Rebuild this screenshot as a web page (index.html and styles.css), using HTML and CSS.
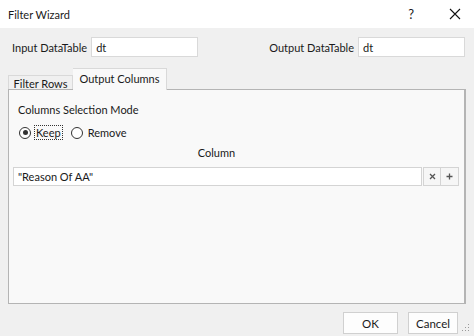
FILE: index.html
```html
<!DOCTYPE html>
<html lang="en">
<head>
    <meta charset="UTF-8">
    <title>Filter Wizard</title>
    <link rel="stylesheet" href="styles.css">
</head>
<body>
    <div class="window">
        <div class="titlebar">
            <span class="title">Filter Wizard</span>
            <div class="title-buttons">
                <span class="help">?</span>
                <svg class="close" width="12" height="12" viewBox="0 0 12 12">
                    <path d="M1 1 L11 11 M11 1 L1 11" stroke="#111" stroke-width="1.1" fill="none"/>
                </svg>
            </div>
        </div>

        <div class="tables">
            <div class="field">
                <label>Input DataTable</label>
                <div class="textbox table-box">dt</div>
            </div>
            <div class="field">
                <label>Output DataTable</label>
                <div class="textbox table-box">dt</div>
            </div>
        </div>

        <div class="tabs">
            <div class="tab">Filter Rows</div>
            <div class="tab active">Output Columns</div>
        </div>

        <div class="panel">
            <div class="group-title">Columns Selection Mode</div>
            <div class="radios">
                <div class="radio checked">
                    <span class="circle"></span>
                    <span class="radio-label focus">Keep</span>
                </div>
                <div class="radio">
                    <span class="circle"></span>
                    <span class="radio-label">Remove</span>
                </div>
            </div>
            <div class="column-header">Column</div>
            <div class="column-row">
                <div class="textbox column-box">"Reason Of AA"</div>
                <button class="small-btn">
                    <svg width="7" height="7" viewBox="0 0 7 7"><path d="M1 1 L6 6 M6 1 L1 6" stroke="#555" stroke-width="1.3"/></svg>
                </button>
                <button class="small-btn">
                    <svg width="7" height="7" viewBox="0 0 7 7"><path d="M3.5 0.5 V6.5 M0.5 3.5 H6.5" stroke="#555" stroke-width="1.3"/></svg>
                </button>
            </div>
        </div>

        <div class="footer">
            <button class="button">OK</button>
            <button class="button">Cancel</button>
            <svg class="grip" width="8" height="8" viewBox="0 0 8 8">
                <rect x="6" y="0" width="1" height="1" fill="#999"/>
                <rect x="3" y="3" width="1" height="1" fill="#999"/>
                <rect x="6" y="3" width="1" height="1" fill="#999"/>
                <rect x="0" y="6" width="1" height="1" fill="#999"/>
                <rect x="3" y="6" width="1" height="1" fill="#999"/>
                <rect x="6" y="6" width="1" height="1" fill="#999"/>
            </svg>
        </div>
    </div>
</body>
</html>
```

FILE: styles.css
```css
:root {
    --window-bg: #f0f0f0;
    --panel-bg: #f9f9f9;
    --panel-border: #b4b4b4;
    --input-border: #d9d9d9;
    --text-color: #1a1a1a;
}

* {
    box-sizing: border-box;
    margin: 0;
    padding: 0;
}

body {
    font-family: Lato, 'Open Sans', sans-serif;
    font-size: 11px;
    color: var(--text-color);
    background: var(--window-bg);
}

.window {
    width: 474px;
    height: 336px;
    display: flex;
    flex-direction: column;
    position: relative;
}

/* Title bar */
.titlebar {
    height: 28px;
    background: #ffffff;
    display: flex;
    align-items: center;
    justify-content: space-between;
    padding: 0 13px 0 8px;
}

.title-buttons {
    display: flex;
    align-items: center;
    gap: 35px;
}

.help {
    font-size: 13px;
}

/* Data table row */
.tables {
    display: flex;
    justify-content: space-between;
    padding: 9px 9px 0 12px;
}

.field {
    display: flex;
    align-items: center;
    gap: 4px;
}

.textbox {
    background: #ffffff;
    border: 1px solid var(--input-border);
    height: 20px;
    padding: 0 4px;
    display: flex;
    align-items: center;
}

.table-box {
    width: 107px;
}

/* Tabs */
.tabs {
    display: flex;
    align-items: flex-end;
    padding: 0 8px;
    margin-top: 11px;
    height: 21px;
    position: relative;
    z-index: 1;
}

.tab {
    width: 65px;
    height: 14px;
    border: 1px solid var(--input-border);
    border-bottom: none;
    background: var(--window-bg);
    display: flex;
    align-items: center;
    justify-content: center;
    padding-top: 2px;
}

.tab.active {
    width: 94px;
    height: 22px;
    margin-bottom: -1px;
    background: var(--panel-bg);
    padding: 0 0 2px;
    border-left: none;
}

/* Panel */
.panel {
    margin: 0 8px;
    height: 215px;
    background: var(--panel-bg);
    border: 1px solid var(--panel-border);
    border-right-width: 2px;
    padding: 13px 4px 0 4px;
}

.group-title {
    padding-left: 5px;
    height: 16px;
}

.radios {
    display: flex;
    gap: 8px;
    padding-left: 6px;
    margin-top: 6px;
}

.radio {
    display: flex;
    align-items: center;
    gap: 3px;
}

.circle {
    width: 12px;
    height: 12px;
    border: 1px solid #333;
    border-radius: 50%;
    background: #ffffff;
    position: relative;
}

.radio.checked .circle::after {
    content: '';
    position: absolute;
    left: 2.5px;
    top: 2.5px;
    width: 5px;
    height: 5px;
    border-radius: 50%;
    background: #333;
}

.radio-label {
    padding: 0 1px;
    border: 1px solid transparent;
}

.radio-label.focus {
    border: 1px dotted #333;
}

.column-header {
    text-align: center;
    margin-top: 6px;
    height: 18px;
    padding-right: 40px;
}

.column-row {
    display: flex;
    margin-top: 3px;
}

.column-box {
    width: 409px;
    height: 19px;
    border-color: #d4d4d4;
}

.small-btn {
    width: 18px;
    height: 19px;
    background: #f6f6f6;
    border: 1px solid #d4d4d4;
    margin-left: 1px;
    display: flex;
    align-items: center;
    justify-content: center;
}

.small-btn + .small-btn {
    margin-left: 0;
    border-left: none;
}

/* Footer */
.footer {
    display: flex;
    justify-content: flex-end;
    gap: 10px;
    padding: 8px 16px 0 0;
}

.button {
    height: 22px;
    width: 55px;
    background: #fdfdfd;
    border: 1px solid #d0d0d0;
    font-family: inherit;
    font-size: 11.5px;
    color: var(--text-color);
}

.button + .button {
    width: 50px;
}

.grip {
    position: absolute;
    right: 4px;
    bottom: 4px;
}
```
